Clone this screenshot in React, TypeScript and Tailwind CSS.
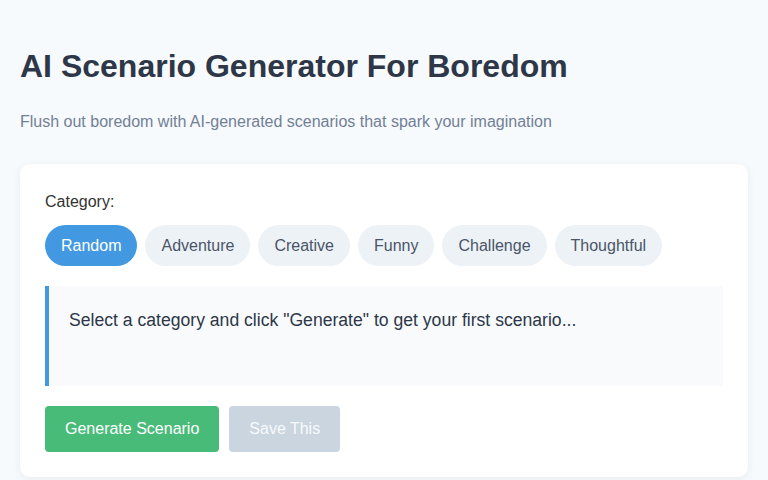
export default function App() {
  const cats = ["Random", "Adventure", "Creative", "Funny", "Challenge", "Thoughtful"];
  return (
    <div className="min-h-screen bg-[#f7fafc] px-5 pt-[47px] pb-5" style={{ fontFamily: '"Liberation Sans", Arial, sans-serif' }}>
      <h1 className="text-[32px] leading-[38px] font-bold text-[#2d3748]">AI Scenario Generator For Boredom</h1>
      <p className="mt-[25px] text-base leading-6 text-[#718096]">Flush out boredom with AI-generated scenarios that spark your imagination</p>
      <div className="mt-[30px] rounded-[10px] bg-white px-[25px] pt-[26px] pb-[25px] shadow-[0_2px_10px_rgba(0,0,0,0.06)]">
        <div className="text-base leading-6 text-[#333333]">Category:</div>
        <div className="mt-[11px] flex flex-wrap gap-2">
          {cats.map((c, i) => (
            <button
              key={c}
              className={
                i === 0
                  ? "flex h-[41px] items-center rounded-full bg-[#4299e1] px-4 text-base text-white"
                  : "flex h-[41px] items-center rounded-full bg-[#edf2f7] px-4 text-base text-[#4a5568]"
              }
            >
              {c}
            </button>
          ))}
        </div>
        <div className="mt-5 min-h-[100px] border-l-4 border-[#4299e1] bg-[#f8fafc] p-5 text-[17.6px] leading-[1.6] text-[#2d3748]">
          Select a category and click "Generate" to get your first scenario...
        </div>
        <div className="mt-5 flex gap-[10px]">
          <button className="flex h-[46px] items-center rounded-[4px] bg-[#48bb78] px-5 text-base text-white">Generate Scenario</button>
          <button className="flex h-[46px] items-center rounded-[4px] bg-[#cbd5e0] px-5 text-base text-[#f7fafc]">Save This</button>
        </div>
      </div>
    </div>
  );
}
